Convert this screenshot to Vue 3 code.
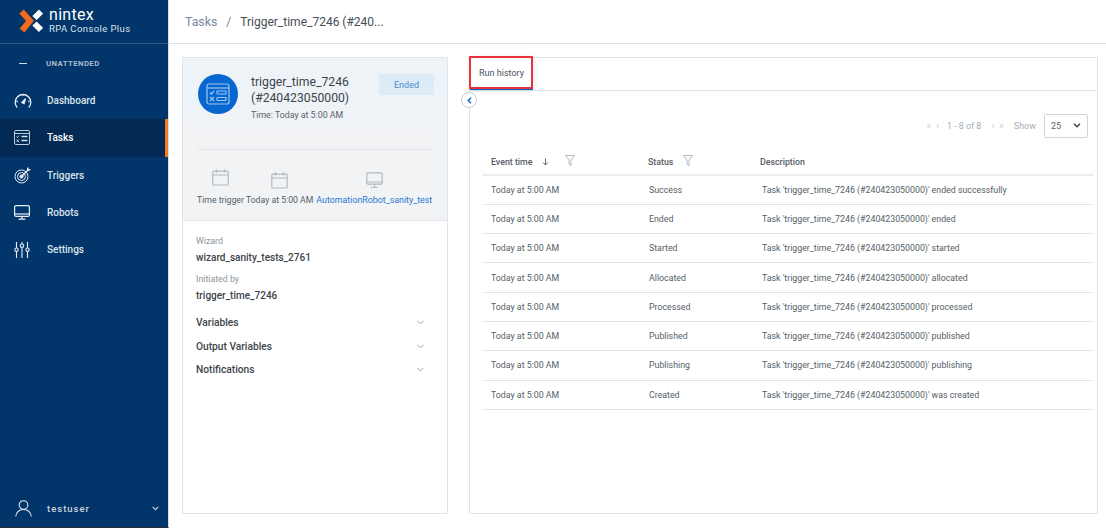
<script setup>
const navItems = [
  { label: 'Dashboard', icon: 'dashboard' },
  { label: 'Tasks', icon: 'tasks', active: true },
  { label: 'Triggers', icon: 'triggers' },
  { label: 'Robots', icon: 'robots' },
  { label: 'Settings', icon: 'settings' },
];

const taskName = "trigger_time_7246 (#240423050000)";

const rows = [
  { status: 'Success', text: 'ended successfully' },
  { status: 'Ended', text: 'ended' },
  { status: 'Started', text: 'started' },
  { status: 'Allocated', text: 'allocated' },
  { status: 'Processed', text: 'processed' },
  { status: 'Published', text: 'published' },
  { status: 'Publishing', text: 'publishing' },
  { status: 'Created', text: 'was created' },
];

const sections = ['Variables', 'Output Variables', 'Notifications'];
</script>

<template>
  <div class="app">
    <aside class="sidebar">
      <div class="logo">
        <svg class="logo-mark" width="24" height="24" viewBox="0 0 24 24" fill="none" stroke-width="6">
          <path d="M2.5 2.5 L11 11.8 L3 21.5" stroke="#f26a1b" />
          <path d="M22 2.5 L15.5 9 M15.5 14.5 L22 21" stroke="#ffffff" />
        </svg>
        <div class="logo-text">
          <div class="logo-name">nintex</div>
          <div class="logo-sub">RPA Console Plus</div>
        </div>
      </div>

      <div class="mode">
        <span class="mode-dash"></span>
        <span class="mode-label">UNATTENDED</span>
      </div>

      <nav class="nav">
        <a v-for="item in navItems" :key="item.label" class="nav-item" :class="{ active: item.active }">
          <span class="nav-icon">
            <svg v-if="item.icon === 'dashboard'" width="18" height="18" viewBox="0 0 18 18" fill="none" stroke="#e8eef5" stroke-width="1.3">
              <path d="M3.2 15.5 A7.8 7.8 0 1 1 14.8 15.5" />
              <path d="M8 10.5 L11.5 6.8 L10 11.5 Z" fill="#e8eef5" />
              <path d="M2.5 9.5 H3.8 M14.2 9.5 H15.5 M9 2.5 V3.8" />
            </svg>
            <svg v-else-if="item.icon === 'tasks'" width="16" height="15" viewBox="0 0 16 15" fill="none" stroke="#d5dfea" stroke-width="0.9">
              <rect x="0.5" y="0.5" width="15" height="14" rx="1.5" />
              <path d="M0.5 3.5 H15.5" />
              <path d="M2.5 6.5 L3.5 7.5 L5 5.5 M2.5 9.5 L5 12 M5 9.5 L2.5 12" />
              <path d="M7.5 6.5 H13.5 M7.5 10.5 H13.5" stroke-width="1.4" />
            </svg>
            <svg v-else-if="item.icon === 'triggers'" width="18" height="18" viewBox="0 0 18 18" fill="none" stroke="#e8eef5" stroke-width="1">
              <circle cx="7.5" cy="10.5" r="6.5" />
              <circle cx="7.5" cy="10.5" r="4" />
              <circle cx="7.5" cy="10.5" r="1.6" fill="#e8eef5" />
              <path d="M7.5 10.5 L14 4" stroke-width="1.4" />
              <path d="M13 2.5 L14 0.8 L14.6 3.2 L17 3.6 L15 5 L13 5 Z" fill="#ffffff" stroke="none" />
            </svg>
            <svg v-else-if="item.icon === 'robots'" width="16" height="15" viewBox="0 0 16 15" fill="none" stroke="#e8eef5" stroke-width="1.2">
              <rect x="0.6" y="0.6" width="14.8" height="10.8" rx="1.5" />
              <path d="M0.6 9 H15.4" />
              <path d="M8 11.5 V14 M4.5 14.2 H11.5" />
            </svg>
            <svg v-else width="16" height="18" viewBox="0 0 16 18" fill="none" stroke="#e8eef5" stroke-width="1.1">
              <path d="M2.5 1 V7 M2.5 10.5 V17 M8 1 V3 M8 6.5 V17 M13.5 1 V7 M13.5 10.5 V17" />
              <circle cx="2.5" cy="8.7" r="1.7" />
              <circle cx="8" cy="4.7" r="1.7" />
              <circle cx="13.5" cy="8.7" r="1.7" />
            </svg>
          </span>
          <span>{{ item.label }}</span>
        </a>
      </nav>

      <div class="user">
        <svg width="17" height="17" viewBox="0 0 17 17" fill="none" stroke="#dbe4ee" stroke-width="1.1">
          <circle cx="8.5" cy="5" r="4.3" />
          <path d="M0.7 16.5 C1.5 11.5 4.5 9.5 8.5 9.5 C12.5 9.5 15.5 11.5 16.3 16.5" />
        </svg>
        <span class="user-name">testuser</span>
        <svg class="user-caret" width="7" height="5" viewBox="0 0 7 5" fill="none" stroke="#c4d1e0" stroke-width="1.2">
          <path d="M0.7 0.8 L3.5 3.6 L6.3 0.8" />
        </svg>
      </div>
    </aside>

    <div class="main">
      <header class="topbar">
        <span class="crumb-link">Tasks</span>
        <span class="crumb-sep">/</span>
        <span class="crumb-current">Trigger_time_7246 (#240...</span>
      </header>

      <div class="content">
        <section class="task-card">
          <div class="task-head">
            <div class="task-summary">
              <div class="task-avatar">
                <svg width="24" height="22" viewBox="0 0 24 22" fill="none" stroke="#9cc3ec" stroke-width="1.2">
                  <rect x="1" y="1" width="22" height="20" rx="2" />
                  <path d="M1 5 H23" />
                  <path d="M4 9.5 L5.5 11 L8 8 M4 14 L8 18 M8 14 L4 18" />
                  <rect x="11" y="8" width="9" height="3" rx="0.5" />
                  <rect x="11" y="14.5" width="9" height="3" rx="0.5" />
                </svg>
              </div>
              <div class="task-info">
                <div class="task-title">{{ taskName }}</div>
                <div class="task-time">Time: Today at 5:00 AM</div>
              </div>
              <div class="task-badge">Ended</div>
            </div>
            <div class="task-divider"></div>
            <div class="task-meta">
              <div class="meta-item meta-first">
                <svg width="17" height="17" viewBox="0 0 17 17" fill="none" stroke="#b4b9be" stroke-width="1.2">
                  <rect x="0.8" y="2.2" width="15.4" height="13.8" rx="1" />
                  <path d="M0.8 6 H16.2 M4.5 0.3 V3.5 M12.5 0.3 V3.5" />
                </svg>
                <span>Time trigger</span>
              </div>
              <div class="meta-item meta-second">
                <svg width="17" height="17" viewBox="0 0 17 17" fill="none" stroke="#b4b9be" stroke-width="1.2">
                  <rect x="0.8" y="2.2" width="15.4" height="13.8" rx="1" />
                  <path d="M0.8 6 H16.2 M4.5 0.3 V3.5 M12.5 0.3 V3.5" />
                </svg>
                <span>Today at 5:00 AM</span>
              </div>
              <div class="meta-item meta-third">
                <svg width="17" height="17" viewBox="0 0 17 17" fill="none" stroke="#b4b9be" stroke-width="1.2">
                  <rect x="0.8" y="0.8" width="15.4" height="11.4" rx="1.5" />
                  <path d="M0.8 10 H16.2 M8.5 12.2 V15 M5 15.5 H12" />
                </svg>
                <span class="meta-link">AutomationRobot_sanity_test</span>
              </div>
            </div>
          </div>

          <div class="task-body">
            <div class="field-label">Wizard</div>
            <div class="field-value">wizard_sanity_tests_2761</div>
            <div class="field-label field-gap">Initiated by</div>
            <div class="field-value">trigger_time_7246</div>
            <div class="accordion">
              <div v-for="name in sections" :key="name" class="accordion-row">
                <span>{{ name }}</span>
                <svg width="7" height="5" viewBox="0 0 7 5" fill="none" stroke="#9aa3ad" stroke-width="1">
                  <path d="M0.5 0.8 L3.5 3.8 L6.5 0.8" />
                </svg>
              </div>
            </div>
          </div>
        </section>

        <section class="history">
          <div class="tabs">
            <div class="tab">Run history</div>
            <div class="tab-highlight"></div>
          </div>
          <button class="collapse" type="button">
            <svg width="5" height="7" viewBox="0 0 5 7" fill="none" stroke="#0a66cc" stroke-width="1.4">
              <path d="M4 0.7 L1.2 3.5 L4 6.3" />
            </svg>
          </button>

          <div class="history-body">
            <div class="pager">
              <span class="pager-arrows">« &nbsp;‹</span>
              <span class="pager-count">1 - 8 of 8</span>
              <span class="pager-arrows">› &nbsp;»</span>
              <span class="pager-show">Show</span>
              <div class="pager-select">
                <span>25</span>
                <svg width="8" height="5" viewBox="0 0 8 5" fill="none" stroke="#33404d" stroke-width="1.3">
                  <path d="M1 0.8 L4 3.8 L7 0.8" />
                </svg>
              </div>
            </div>

            <table class="table">
              <thead>
                <tr>
                  <th class="col-time">
                    <div class="th-inner">
                      <span>Event time</span>
                      <svg class="sort" width="7" height="8" viewBox="0 0 7 8" fill="none" stroke="#5b6570" stroke-width="1">
                        <path d="M3.5 0.5 V7 M1 4.5 L3.5 7 L6 4.5" />
                      </svg>
                      <svg class="filter filter-time" width="10" height="11" viewBox="0 0 10 11" fill="none" stroke="#a9b1b9" stroke-width="0.9">
                        <path d="M0.5 0.5 H9.5 L6 5 V10.5 L4 9 V5 Z" />
                      </svg>
                    </div>
                  </th>
                  <th class="col-status">
                    <div class="th-inner">
                      <span>Status</span>
                      <svg class="filter filter-status" width="10" height="11" viewBox="0 0 10 11" fill="none" stroke="#a9b1b9" stroke-width="0.9">
                        <path d="M0.5 0.5 H9.5 L6 5 V10.5 L4 9 V5 Z" />
                      </svg>
                    </div>
                  </th>
                  <th>Description</th>
                </tr>
              </thead>
              <tbody>
                <tr v-for="row in rows" :key="row.status">
                  <td>Today at 5:00 AM</td>
                  <td class="td-status">{{ row.status }}</td>
                  <td class="td-desc">Task '{{ taskName }}' {{ row.text }}</td>
                </tr>
              </tbody>
            </table>
          </div>
        </section>
      </div>
    </div>
  </div>
</template>

<style>
html,
body {
  margin: 0;
  background: #fff;
}
</style>

<style scoped>
.app {
  display: flex;
  width: 1106px;
  height: 528px;
  overflow: hidden;
  font-family: Roboto, "Liberation Sans", sans-serif;
  color: #3b444d;
}

/* sidebar */
.sidebar {
  width: 169px;
  flex-shrink: 0;
  display: flex;
  flex-direction: column;
  background: #023569;
  border-right: 1px solid #d5dde6;
  border-bottom: 1px solid #2a2f36;
  color: #e8eef5;
  box-sizing: border-box;
}
.logo {
  height: 43px;
  flex-shrink: 0;
  display: flex;
  align-items: center;
  gap: 6px;
  padding: 0 0 0 19px;
  border-bottom: 1px solid #34598a;
}
.logo-mark {
  margin-top: -2px;
}
.logo-text {
  line-height: 1;
  margin-top: -2px;
}
.logo-name {
  font-size: 16px;
  font-weight: 400;
  color: #fff;
  letter-spacing: 0.3px;
}
.logo-sub {
  font-size: 9.5px;
  color: #d8e2ee;
  margin-top: 1px;
  letter-spacing: 0.4px;
}
.mode {
  height: 37px;
  display: flex;
  align-items: center;
  flex-shrink: 0;
  padding-left: 19px;
  margin-top: 1px;
}
.mode-dash {
  width: 8px;
  height: 1px;
  background: #cfd9e5;
  margin-right: 19px;
}
.mode-label {
  font-size: 7.8px;
  font-weight: 700;
  letter-spacing: 0.4px;
  color: #a9bbd0;
}
.nav {
  display: flex;
  flex-direction: column;
}
.nav-item {
  height: 37.3px;
  display: flex;
  align-items: center;
  font-size: 10px;
  font-weight: 500;
  color: #dbe4ee;
  box-sizing: border-box;
}
.nav-item.active {
  background: #022a55;
  border-right: 3px solid #f47b20;
  color: #fff;
}
.nav-icon {
  width: 47px;
  padding-left: 14px;
  box-sizing: border-box;
  display: flex;
  align-items: center;
}
.user {
  margin-top: auto;
  height: 38px;
  display: flex;
  align-items: center;
  padding: 0 9px 0 15px;
  box-sizing: border-box;
}
.user-name {
  margin-left: 15px;
  font-size: 9.5px;
  font-weight: 500;
  letter-spacing: 1px;
  color: #c8d4e2;
}
.user-caret {
  margin-left: auto;
}

/* top bar */
.main {
  flex: 1;
  display: flex;
  flex-direction: column;
  min-width: 0;
}
.topbar {
  height: 44px;
  flex-shrink: 0;
  display: flex;
  align-items: center;
  padding-left: 16px;
  border-bottom: 1px solid #dde1e6;
  box-sizing: border-box;
  font-size: 12px;
}
.crumb-link {
  color: #76859b;
  font-size: 12.3px;
}
.crumb-sep {
  margin: 0 9px;
  color: #76859b;
}
.crumb-current {
  color: #454d55;
}

.content {
  flex: 1;
  display: flex;
  padding: 13px 8px 14px 13px;
  gap: 21px;
  min-height: 0;
}

/* task card */
.task-card {
  width: 266px;
  flex-shrink: 0;
  border: 1px solid #dfe4e8;
  box-sizing: border-box;
  display: flex;
  flex-direction: column;
}
.task-head {
  height: 163px;
  flex-shrink: 0;
  padding: 15px 13px 0 15px;
  box-sizing: border-box;
  background: linear-gradient(#eef3f7 0, #eef3f7 50px, #f2f3f5 80px);
  border-bottom: 1px solid #e1e7ec;
}
.task-summary {
  display: flex;
  align-items: flex-start;
  height: 76px;
}
.task-avatar {
  width: 40px;
  height: 40px;
  border-radius: 50%;
  flex-shrink: 0;
  background: #0767d0;
  display: flex;
  align-items: center;
  justify-content: center;
  margin-top: 1px;
}
.task-info {
  margin-left: 13px;
  width: 110px;
  flex-shrink: 0;
  padding-top: 1px;
}
.task-title {
  font-size: 12.2px;
  line-height: 16px;
  color: #3c444c;
  word-break: break-word;
}
.task-time {
  font-size: 8.8px;
  margin-top: 4px;
  color: #5a636c;
  white-space: nowrap;
}
.task-badge {
  margin-left: auto;
  width: 55px;
  height: 21px;
  flex-shrink: 0;
  margin-top: 1px;
  background: #dcebf5;
  color: #4a8ac9;
  font-size: 9px;
  display: flex;
  align-items: center;
  justify-content: center;
}
.task-divider {
  height: 1px;
  background: #e3e5e8;
  margin-left: -1px;
}
.task-meta {
  display: flex;
  font-size: 8.7px;
  color: #555e67;
  margin-top: 19px;
  margin-left: -1px;
  gap: 2px;
  white-space: nowrap;
}
.meta-item {
  display: flex;
  flex-direction: column;
  align-items: center;
}
.meta-item svg {
  height: 17px;
}
.meta-item span {
  margin-top: 9px;
}
.meta-second,
.meta-third {
  padding-top: 3px;
}
.meta-second span,
.meta-third span {
  margin-top: 6px;
}
.meta-third {
  margin-left: 1px;
}
.meta-link {
  color: #2a78d2;
  font-size: 8.85px;
}
.task-body {
  padding: 15px 13px 0 13px;
}
.field-label {
  font-size: 8.8px;
  color: #8a939c;
  line-height: 11px;
}
.field-gap {
  margin-top: 10px;
}
.field-value {
  font-size: 10px;
  color: #3c444c;
  line-height: 12px;
  margin-top: 5px;
  font-weight: 500;
}
.accordion {
  margin-top: 9px;
}
.accordion-row {
  height: 23.4px;
  display: flex;
  align-items: center;
  justify-content: space-between;
  font-size: 10.2px;
  font-weight: 500;
  color: #3c444c;
  padding-right: 10px;
}

/* run history */
.history {
  flex: 1;
  position: relative;
  border: 1px solid #dfe4e8;
  box-sizing: border-box;
  min-width: 0;
  display: flex;
  flex-direction: column;
}
.tabs {
  height: 33px;
  flex-shrink: 0;
  border-bottom: 1px solid #dfe4e8;
  position: relative;
  box-sizing: border-box;
}
.tab {
  width: 63px;
  height: 30px;
  display: flex;
  align-items: center;
  justify-content: center;
  font-size: 9px;
  font-weight: 400;
  color: #4a535c;
  border-bottom: 2px solid #0a5fc2;
  box-shadow: 0 0 6px rgba(0, 0, 0, 0.12);
}
.tab-highlight {
  position: absolute;
  left: -1px;
  top: -2px;
  width: 64px;
  height: 33px;
  border: 2px solid #e7333c;
  box-sizing: border-box;
}
.collapse {
  position: absolute;
  left: -9px;
  top: 34px;
  width: 16px;
  height: 16px;
  padding: 0;
  border: 1px solid #c8d0d8;
  border-radius: 50%;
  background: #fff;
  display: flex;
  align-items: center;
  justify-content: center;
}
.history-body {
  flex: 1;
  padding: 0 4px 0 13px;
  min-height: 0;
}
.pager {
  height: 35px;
  margin-top: 17px;
  display: flex;
  align-items: center;
  justify-content: flex-end;
  font-size: 8.8px;
  color: #a4adb6;
  padding-right: 5px;
}
.pager-arrows {
  color: #ccd2d8;
  font-size: 10px;
}
.pager-count {
  margin: 0 10px 0 8px;
  color: #a4adb6;
}
.pager-show {
  margin-left: 10px;
  color: #a4adb6;
  font-size: 9px;
}
.pager-select {
  width: 44px;
  height: 24px;
  margin-left: 8px;
  border: 1px solid #cfd5db;
  border-radius: 2px;
  display: flex;
  align-items: center;
  justify-content: space-between;
  padding: 0 6px;
  box-sizing: border-box;
  font-size: 9px;
  color: #5a636c;
}
.table {
  width: 100%;
  margin-top: 7px;
  border-collapse: collapse;
  table-layout: fixed;
  font-size: 8.8px;
  color: #555e67;
}
.table th {
  height: 25px;
  text-align: left;
  font-weight: 500;
  padding: 0 0 0 8px;
  border-bottom: 2px solid #e9edf1;
  color: #555e67;
  box-sizing: border-box;
}
.table td {
  height: 29.3px;
  padding: 0 0 0 8px;
  border-bottom: 1px solid #e1e5e9;
  box-sizing: border-box;
  white-space: nowrap;
}
.table td.td-status {
  padding-left: 9px;
}
.table td.td-desc {
  padding-left: 10px;
}
.col-time {
  width: 157px;
}
.col-status {
  width: 112px;
}
.th-inner {
  display: flex;
  align-items: center;
}
.sort {
  margin-left: 10px;
}
.filter {
  margin-top: -3px;
}
.filter-time {
  margin-left: 16px;
}
.filter-status {
  margin-left: 10px;
}
</style>
